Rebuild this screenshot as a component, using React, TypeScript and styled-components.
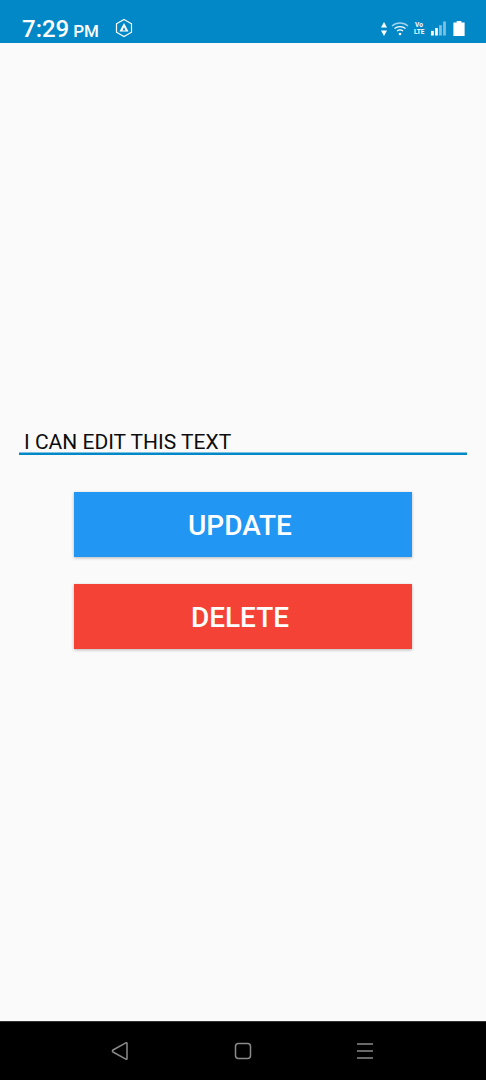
import React from "react";
import styled, { createGlobalStyle } from "styled-components";

const GlobalStyle = createGlobalStyle`
  html, body {
    margin: 0;
    padding: 0;
    background: #fafafa;
    font-family: Roboto, "Liberation Sans", sans-serif;
  }
`;

const Screen = styled.div`
  width: 486px;
  height: 1080px;
  display: flex;
  flex-direction: column;
  overflow: hidden;
`;

const StatusBar = styled.header`
  height: 43px;
  background: #0288c7;
  color: #fff;
  display: flex;
  align-items: center;
  justify-content: space-between;
  padding: 14px 21px 0 22px;
  box-sizing: border-box;
`;

const StatusLeft = styled.div`
  display: flex;
  align-items: center;
`;

const Time = styled.span`
  font-size: 24px;
  line-height: 28px;
  font-weight: 500;
`;

const Meridiem = styled.span`
  font-size: 17px;
  font-weight: 500;
  margin-left: 4px;
  margin-top: 5px;
`;

const AppBadge = styled.svg`
  margin-left: 15px;
  margin-top: -2px;
`;

const StatusRight = styled.div`
  display: flex;
  align-items: center;
`;

const Arrows = styled.svg`
  margin-right: 3px;
`;

const VoLte = styled.span`
  display: block;
  font-size: 6.5px;
  line-height: 7px;
  font-weight: 700;
  text-align: center;
  width: 10px;
  margin: 0 7px 0 5px;
`;

const Battery = styled.svg`
  margin-left: 7px;
`;

const Content = styled.main`
  flex: 1;
  display: flex;
  flex-direction: column;
  align-items: center;
  padding: 384px 19px 0;
`;

const Field = styled.input`
  width: 100%;
  box-sizing: border-box;
  height: 28px;
  padding: 1px 5px 0;
  border: 0;
  box-shadow: inset 0 -2.5px 0 #0288c7;
  background: transparent;
  color: #0d0d0d;
  font-family: Roboto, sans-serif;
  font-size: 21px;
  outline: none;
`;

const Action = styled.button<{ $color: string; $top: number }>`
  width: 338px;
  height: 65px;
  margin-top: ${(p) => p.$top}px;
  padding: 2px 6px 0 0;
  border: 0;
  background: ${(p) => p.$color};
  color: #fff;
  font-family: Roboto, sans-serif;
  font-size: 28px;
  font-weight: 500;
  box-shadow: 0 1px 3px rgba(0, 0, 0, 0.28);
`;

const NavBar = styled.nav`
  height: 59px;
  background: #000;
  display: flex;
  align-items: center;
  justify-content: center;
  gap: 105px;
  padding-bottom: 1px;
  box-sizing: border-box;
  border-top: 1px solid #333;
`;

const App = () => {
  return (
    <>
      <GlobalStyle />
      <Screen>
        <StatusBar>
          <StatusLeft>
            <Time>7:29</Time>
            <Meridiem>PM</Meridiem>
            <AppBadge width="20" height="20" viewBox="0 0 20 20" fill="none">
              <path d="M10 1.5 17.5 5.8v8.4L10 18.5 2.5 14.2V5.8Z" stroke="#fff" strokeWidth="1.2" />
              <path d="M10 5 14.500 13.500H5.500Z" fill="#fff" />
              <path d="M10 9 11.500 12.500H8.500Z" fill="#0288c7" />
            </AppBadge>
          </StatusLeft>
          <StatusRight>
            <Arrows width="8" height="16" viewBox="0 0 8 16" fill="#fff">
              <path d="M4 1 7 6.500H1Z" />
              <path d="M4 15 1 9.500H7Z" />
            </Arrows>
            <svg width="18" height="15" viewBox="0 0 18 15" fill="none">
              <path d="M1 5C5.500 1 12.500 1 17 5" stroke="#9fd3ec" strokeWidth="1.300" />
              <path d="M3.500 7.500C6.500 5 11.500 5 14.500 7.500" stroke="#fff" strokeWidth="1.300" />
              <path d="M6 10C7.800 8.700 10.200 8.700 12 10" stroke="#fff" strokeWidth="1.300" />
              <circle cx="9" cy="13" r="1.300" fill="#fff" />
            </svg>
            <VoLte>
              Vo
              <br />
              LTE
            </VoLte>
            <svg width="15" height="15" viewBox="0 0 16 15">
              <rect x="0" y="10" width="3" height="5" fill="#fff" />
              <rect x="4.300" y="7" width="3" height="8" fill="#fff" />
              <rect x="8.600" y="4" width="3" height="11" fill="#7fc0e0" />
              <rect x="12.900" y="0" width="3" height="15" fill="#7fc0e0" />
            </svg>
            <Battery width="12" height="15" viewBox="0 0 12 16" fill="#fff">
              <path d="M3.500 0h5v1.500H12V16H0V1.500h3.500Z" />
            </Battery>
          </StatusRight>
        </StatusBar>
        <Content>
          <Field defaultValue="I CAN EDIT THIS TEXT" />
          <Action $color="#2196f3" $top={37}>UPDATE</Action>
          <Action $color="#f44336" $top={27}>DELETE</Action>
        </Content>
        <NavBar>
          <svg width="18" height="20" viewBox="0 0 18 20" fill="none" stroke="#8a8a8a" strokeWidth="1.500">
            <path d="M16 2.500v15c0 .8-.6 1-1.200.7L2 11c-.8-.5-.8-1.500 0-2l12.800-7.200c.6-.3 1.200 0 1.200.7Z" />
          </svg>
          <svg width="18" height="18" viewBox="0 0 18 18" fill="none" stroke="#8a8a8a" strokeWidth="1.500">
            <rect x="1.500" y="1.500" width="15" height="15" rx="3" />
          </svg>
          <svg width="18" height="18" viewBox="0 0 18 18" fill="none" stroke="#8a8a8a" strokeWidth="1.300">
            <path d="M0 2h16M0 9h16M0 16h16" />
          </svg>
        </NavBar>
      </Screen>
    </>
  );
};

export default App;
